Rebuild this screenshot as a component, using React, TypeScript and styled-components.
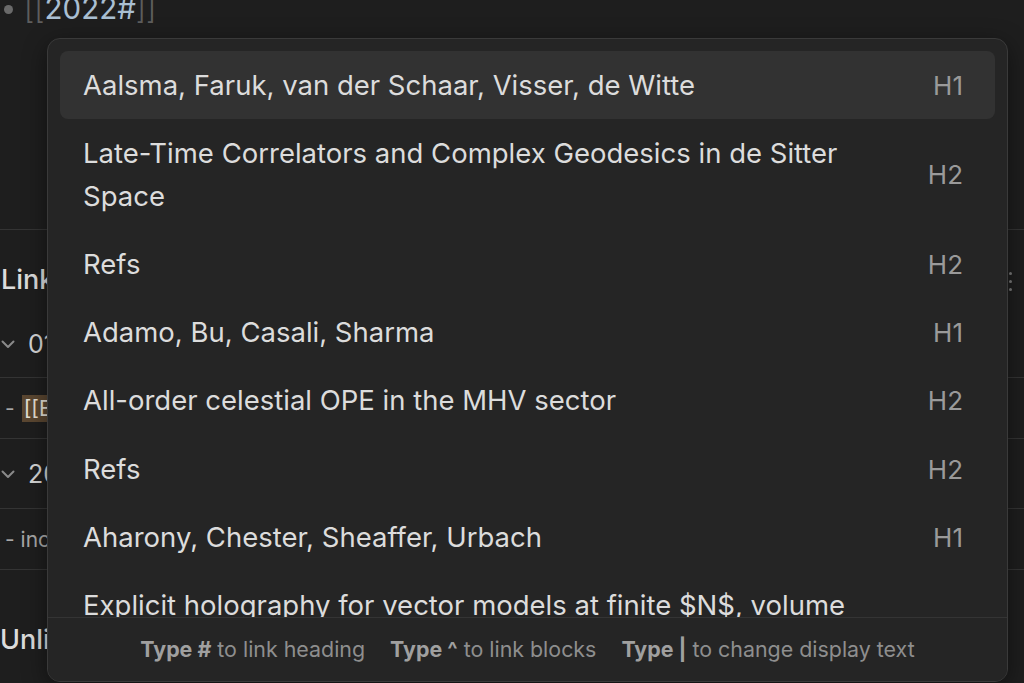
import React from "react";
import styled, { createGlobalStyle } from "styled-components";

const GlobalStyle = createGlobalStyle`
  html, body { margin: 0; padding: 0; background: #1e1e1e; }
  body { font-family: Inter, "Noto Sans", "Liberation Sans", sans-serif; overflow: hidden; }
  * { box-sizing: border-box; }
`;

const Page = styled.div`
  position: relative;
  width: 1024px;
  height: 683px;
  overflow: hidden;
  background: #1e1e1e;
  color: #dadada;
`;

const Doc = styled.div`
  display: flex;
  flex-direction: column;
`;

const BulletLine = styled.div`
  display: flex;
  align-items: center;
  gap: 11px;
  height: 24px;
  margin-top: -4px;
  padding-left: 4px;
  font-size: 29.5px;
  line-height: 24px;
`;

const Bullet = styled.span`
  width: 9px;
  height: 9px;
  border-radius: 50%;
  background: #6a6a6a;
  margin-top: 2px;
`;

const Bracket = styled.span`
  color: #5e5e5e;
  font-weight: 300;
`;

const LinkText = styled.span`
  color: #a9bfd2;
`;

const Backlinks = styled.div`
  margin-top: 209px;
  border-top: 1px solid #343434;
  display: flex;
  flex-direction: column;
`;

const Heading = styled.div`
  height: 81px;
  display: flex;
  align-items: center;
  padding-left: 1px;
  padding-top: 18px;
  font-size: 27px;
  font-weight: 500;
  color: #dcdcdc;
`;

const Row = styled.div<{ $h: number }>`
  height: ${(p) => p.$h}px;
  display: flex;
  align-items: center;
  gap: 13px;
  border-bottom: 1px solid #343434;
  padding-left: 1px;
`;

const GroupTitle = styled.span`
  font-size: 25px;
  color: #d6d6d6;
`;

const Snippet = styled.span`
  font-size: 21px;
  color: #a8a8a8;
  display: flex;
  align-items: center;
  gap: 7px;
  padding-left: 4px;
`;

const Highlight = styled.span`
  background: #5b4731;
  color: #e6e0d6;
  padding: 1px 2px;
`;

const Unlinked = styled.div`
  height: 140px;
  display: flex;
  align-items: center;
  padding-bottom: 2px;
  font-size: 27px;
  font-weight: 500;
  color: #dcdcdc;
`;

const Dots = styled.div`
  position: absolute;
  left: 1009px;
  top: 272px;
  display: flex;
  flex-direction: column;
  gap: 5px;
  span {
    width: 3px;
    height: 3px;
    border-radius: 50%;
    background: #7a7a7a;
  }
`;

const Popover = styled.div`
  position: absolute;
  left: 47px;
  top: 38px;
  width: 961px;
  height: 644px;
  background: #252525;
  border: 1px solid #3a3a3a;
  border-radius: 13px;
  box-shadow: 0 6px 24px rgba(0, 0, 0, 0.45);
  display: flex;
  flex-direction: column;
  overflow: hidden;
`;

const List = styled.div`
  flex: 1;
  overflow: hidden;
  padding: 12px 12px 0 12px;
  display: flex;
  flex-direction: column;
`;

const Item = styled.div<{ $selected?: boolean }>`
  display: flex;
  align-items: center;
  justify-content: space-between;
  gap: 40px;
  padding: 12.6px 32px 12.6px 23px;
  border-radius: 8px;
  background: ${(p) => (p.$selected ? "#323232" : "transparent")};
  flex-shrink: 0;
`;

const Title = styled.div`
  font-size: 27.5px;
  line-height: 43px;
  color: #dcdcdc;
  max-width: 790px;
  white-space: normal;
`;

const Level = styled.div`
  font-size: 26px;
  color: #9a9a9a;
  flex-shrink: 0;
`;

const Footer = styled.div`
  height: 64px;
  flex-shrink: 0;
  border-top: 1px solid #343434;
  display: flex;
  align-items: center;
  justify-content: center;
  gap: 25px;
  font-size: 21.4px;
  color: #8e8e8e;
  padding-bottom: 2px;
  background: #252525;
`;

const Hint = styled.span`
  white-space: nowrap;
  b {
    color: #a0a0a0;
    font-weight: 700;
  }
`;

const Chevron = () => (
  <svg width="14" height="14" viewBox="0 0 14 14" fill="none">
    <path d="M1.5 4.5 L7 10 L12.5 4.5" stroke="#8a8a8a" strokeWidth="2" strokeLinecap="round" strokeLinejoin="round" />
  </svg>
);

const items: { title: string; level: string }[] = [
  { title: "Aalsma, Faruk, van der Schaar, Visser, de Witte", level: "H1" },
  { title: "Late-Time Correlators and Complex Geodesics in de Sitter Space", level: "H2" },
  { title: "Refs", level: "H2" },
  { title: "Adamo, Bu, Casali, Sharma", level: "H1" },
  { title: "All-order celestial OPE in the MHV sector", level: "H2" },
  { title: "Refs", level: "H2" },
  { title: "Aharony, Chester, Sheaffer, Urbach", level: "H1" },
  { title: "Explicit holography for vector models at finite $N$, volume and temperature", level: "H2" },
];

export default function App() {
  return (
    <Page>
      <GlobalStyle />
      <Doc>
        <BulletLine>
          <Bullet />
          <span>
            <Bracket>[[</Bracket>
            <LinkText>2022#</LinkText>
            <Bracket>]]</Bracket>
          </span>
        </BulletLine>
        <Backlinks>
          <Heading>Linked mentions</Heading>
          <Row $h={67}>
            <Chevron />
            <GroupTitle>01 Papers</GroupTitle>
          </Row>
          <Row $h={61}>
            <Snippet>
              -<Highlight>[[Bibliography</Highlight>
            </Snippet>
          </Row>
          <Row $h={70}>
            <Chevron />
            <GroupTitle>2022</GroupTitle>
          </Row>
          <Row $h={61}>
            <Snippet>- included</Snippet>
          </Row>
          <Unlinked>Unlinked mentions</Unlinked>
        </Backlinks>
      </Doc>
      <Dots>
        <span />
        <span />
        <span />
      </Dots>
      <Popover>
        <List>
          {items.map((it, i) => (
            <Item key={i} $selected={i === 0}>
              <Title>{it.title}</Title>
              <Level>{it.level}</Level>
            </Item>
          ))}
        </List>
        <Footer>
          <Hint>
            <b>Type #</b> to link heading
          </Hint>
          <Hint>
            <b>Type ^</b> to link blocks
          </Hint>
          <Hint>
            <b>Type |</b> to change display text
          </Hint>
        </Footer>
      </Popover>
    </Page>
  );
}
